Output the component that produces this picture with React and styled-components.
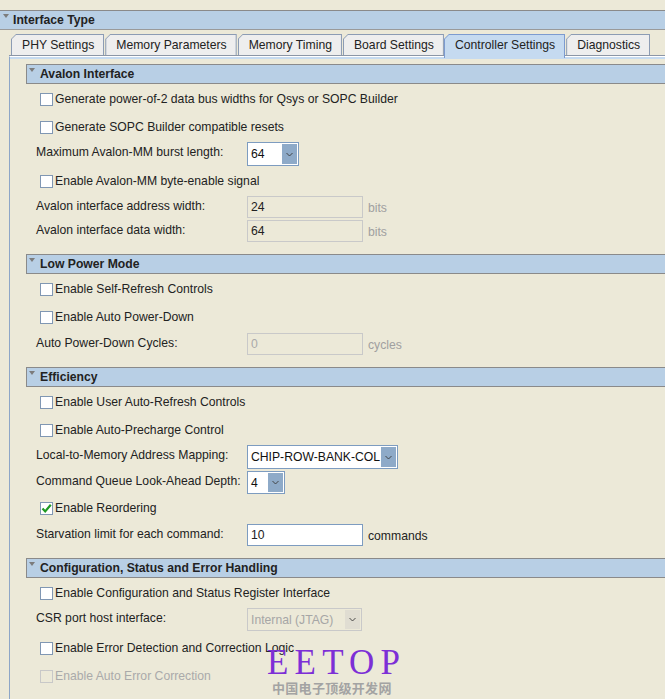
import React from 'react'
import styled, { createGlobalStyle, css } from 'styled-components'

const GlobalStyle = createGlobalStyle`
  html, body { margin:0; padding:0; background:#ECE9D8; }
  body {
    font-family:"Liberation Sans", Arial, sans-serif;
    font-size:12.2px;
    color:#222;
  }
`

const Page = styled.div`
  position:relative;
  height:699px;
  overflow:hidden;
  padding-top:10px;
  box-sizing:border-box;
`

const Caret = styled.span`
  width:0;
  height:0;
  border-left:3.5px solid transparent;
  border-right:3.5px solid transparent;
  border-top:4px solid #7c7c7c;
  align-self:flex-start;
  margin-top:${p => p.$top || 4}px;
  margin-left:${p => p.$left || 3}px;
  margin-right:${p => p.$right || 4}px;
`

const TopBar = styled.div`
  display:flex;
  align-items:center;
  height:20px;
  box-sizing:border-box;
  background:#B8CFE5;
  border-top:1px solid #8a8a8a;
  border-bottom:1px solid #9a9a9a;
  font-weight:bold;
  color:#222;
`

const TabPane = styled.div`
  margin-left:9px;
  margin-top:4px;
`

const TabStrip = styled.div`
  display:flex;
  align-items:flex-end;
  height:21px;
  padding-left:2px;
  border-bottom:1px solid #8c96a6;
  position:relative;
  z-index:1;
`

const Tab = styled.div`
  height:${p => (p.$active ? 24 : 21)}px;
  margin-right:1px;
  margin-left:${p => (p.$active ? -1 : 0)}px;
  margin-bottom:${p => (p.$active ? -3 : 0)}px;
  padding:1px 1px 0 1px;
  box-sizing:border-box;
  background:${p => (p.$active ? '#7c9bd0' : '#8c9cb4')};
  clip-path:polygon(5px 0, 100% 0, 100% 100%, 0 100%, 0 5px);
`

const TabFace = styled.div`
  height:100%;
  padding:0 9px 0 10px;
  display:flex;
  align-items:${p => (p.$active ? 'flex-start' : 'center')};
  padding-top:${p => (p.$active ? 3 : 0)}px;
  box-sizing:border-box;
  background:${p => (p.$active ? '#C5DAF0' : '#EEEEEE')};
  clip-path:polygon(4px 0, 100% 0, 100% 100%, 0 100%, 0 4px);
  color:#222;
  white-space:nowrap;
`

const Panel = styled.div`
  border-left:1px solid #8da6c7;
  border-top:1px solid #ffffff;
  box-shadow:inset 0 2px 0 #C5DAF0;
  padding:7px 0 0 16px;
  height:700px;
`

const Section = styled.div`
  margin-bottom:12px;
`

const SectionBar = styled.div`
  display:flex;
  align-items:center;
  height:20px;
  box-sizing:border-box;
  background:#B8CFE5;
  border:1px solid #8a8a8a;
  border-right:none;
  font-weight:bold;
  color:#222;
`

const SectionBody = styled.div`
  padding-top:1px;
  display:flex;
  flex-direction:column;
`

const CheckRow = styled.label`
  display:flex;
  align-items:center;
  height:28px;
  margin-top:${p => p.$gap || 0}px;
  padding-left:14px;
  color:${p => (p.$disabled ? '#aaa' : '#222')};
`

const Box = styled.span`
  width:13px;
  height:13px;
  box-sizing:border-box;
  border:1px solid ${p => (p.$disabled ? '#c8c8c8' : '#8097b3')};
  background:${p => (p.$disabled ? 'transparent' : '#fff')};
  margin-right:2px;
  display:flex;
  align-items:center;
  justify-content:center;
`

const FieldRow = styled.div`
  display:flex;
  align-items:flex-start;
  padding-left:10px;
  margin-top:${p => p.$gap || 1}px;
`

const Label = styled.span`
  width:211px;
  padding-top:2.5px;
  color:#222;
  white-space:nowrap;
`

const fieldBase = css`
  box-sizing:border-box;
  display:flex;
  align-items:center;
`

const TextField = styled.div`
  ${fieldBase}
  width:116px;
  height:22px;
  padding-left:3px;
  border:1px solid ${p => (p.$disabled ? '#c9c9c9' : '#7d9cc0')};
  background:${p => (p.$disabled ? 'transparent' : '#fff')};
  color:${p => (p.$muted ? '#aaa' : '#222')};
`

const Unit = styled.span`
  margin-left:5px;
  padding-top:5px;
  color:${p => (p.$muted ? '#a0a0a0' : '#222')};
`

const Combo = styled.div`
  ${fieldBase}
  width:${p => p.$w}px;
  height:${p => p.$h || 23}px;
  padding:1px;
  border:1px solid ${p => (p.$disabled ? '#c9c9c9' : '#7d9cc0')};
  background:${p => (p.$disabled ? 'transparent' : '#fff')};
  color:${p => (p.$disabled ? '#a6a6a6' : '#111')};
`

const ComboText = styled.span`
  flex:1;
  padding-left:2px;
  white-space:nowrap;
  overflow:hidden;
`

const ComboButton = styled.span`
  width:15px;
  flex-shrink:0;
  align-self:stretch;
  background:${p => (p.$disabled ? '#e0ddd2' : '#8eaac8')};
  display:flex;
  align-items:center;
  justify-content:center;
`

const Watermark = styled.div`
  position:absolute;
  left:266px;
  top:646px;
  display:flex;
  flex-direction:column;
  align-items:flex-start;
  pointer-events:none;
`

const WatermarkTitle = styled.div`
  font-family:"Liberation Serif", "Times New Roman", serif;
  font-size:35px;
  letter-spacing:6.2px;
  line-height:34px;
  color:#7d2fd6;
  padding-left:1px;
`

const WatermarkSub = styled.div`
  font-family:"Noto Sans CJK SC", sans-serif;
  font-size:13px;
  font-weight:bold;
  color:#a3a3a3;
  line-height:15px;
  margin-left:6px;
  letter-spacing:0.3px;
`

const Chevron = () => (
  <svg width="7" height="5" viewBox="0 0 7 5">
    <path d="M0.5 1 L3.5 4 L6.5 1" fill="none" stroke="#3a3a3a" strokeWidth="0.9" />
  </svg>
)

const Tick = () => (
  <svg width="11" height="11" viewBox="0 0 11 11">
    <path d="M1.5 5.5 L4.2 8.4 L9.8 1.8" fill="none" stroke="#1f9a22" strokeWidth="2.2" />
  </svg>
)

function Check({ label, checked, disabled, gap }) {
  return (
    <CheckRow $disabled={disabled} $gap={gap}>
      <Box $disabled={disabled}>{checked && <Tick />}</Box>
      {label}
    </CheckRow>
  )
}

function ComboBox({ value, width, height, disabled }) {
  return (
    <Combo $w={width} $h={height} $disabled={disabled}>
      <ComboText>{value}</ComboText>
      <ComboButton $disabled={disabled}><Chevron /></ComboButton>
    </Combo>
  )
}

function Group({ title, children }) {
  return (
    <Section>
      <SectionBar>
        <Caret $top={3} $left={2} $right={5} />
        {title}
      </SectionBar>
      <SectionBody>{children}</SectionBody>
    </Section>
  )
}

const tabs = ['PHY Settings', 'Memory Parameters', 'Memory Timing', 'Board Settings', 'Controller Settings', 'Diagnostics']

export default function App() {
  return (
    <>
      <GlobalStyle />
      <Page>
        <TopBar>
          <Caret $top={3} $left={3} $right={4} />
          Interface Type
        </TopBar>
        <TabPane>
          <TabStrip>
            {tabs.map(t => (
              <Tab key={t} $active={t === 'Controller Settings'}>
                <TabFace $active={t === 'Controller Settings'}>{t}</TabFace>
              </Tab>
            ))}
          </TabStrip>
          <Panel>
            <Group title="Avalon Interface">
              <Check label="Generate power-of-2 data bus widths for Qsys or SOPC Builder" />
              <Check label="Generate SOPC Builder compatible resets" />
              <FieldRow>
                <Label>Maximum Avalon-MM burst length:</Label>
                <ComboBox value="64" width={52} height={24} />
              </FieldRow>
              <Check label="Enable Avalon-MM byte-enable signal" gap={1} />
              <FieldRow>
                <Label>Avalon interface address width:</Label>
                <TextField $disabled>24</TextField>
                <Unit $muted>bits</Unit>
              </FieldRow>
              <FieldRow $gap={2}>
                <Label>Avalon interface data width:</Label>
                <TextField $disabled>64</TextField>
                <Unit $muted>bits</Unit>
              </FieldRow>
            </Group>
            <Group title="Low Power Mode">
              <Check label="Enable Self-Refresh Controls" />
              <Check label="Enable Auto Power-Down" />
              <FieldRow $gap={2}>
                <Label>Auto Power-Down Cycles:</Label>
                <TextField $disabled $muted>0</TextField>
                <Unit $muted>cycles</Unit>
              </FieldRow>
            </Group>
            <Group title="Efficiency">
              <Check label="Enable User Auto-Refresh Controls" />
              <Check label="Enable Auto-Precharge Control" />
              <FieldRow>
                <Label>Local-to-Memory Address Mapping:</Label>
                <ComboBox value="CHIP-ROW-BANK-COL" width={151} height={24} />
              </FieldRow>
              <FieldRow $gap={2}>
                <Label>Command Queue Look-Ahead Depth:</Label>
                <ComboBox value="4" width={38} height={23} />
              </FieldRow>
              <Check label="Enable Reordering" checked />
              <FieldRow $gap={2}>
                <Label>Starvation limit for each command:</Label>
                <TextField>10</TextField>
                <Unit>commands</Unit>
              </FieldRow>
            </Group>
            <Group title="Configuration, Status and Error Handling">
              <Check label="Enable Configuration and Status Register Interface" />
              <FieldRow>
                <Label>CSR port host interface:</Label>
                <ComboBox value="Internal (JTAG)" width={115} height={23} disabled />
              </FieldRow>
              <Check label="Enable Error Detection and Correction Logic" gap={3} />
              <Check label="Enable Auto Error Correction" disabled />
            </Group>
          </Panel>
        </TabPane>
        <Watermark>
          <WatermarkTitle>EETOP</WatermarkTitle>
          <WatermarkSub>中国电子顶级开发网</WatermarkSub>
        </Watermark>
      </Page>
    </>
  )
}
